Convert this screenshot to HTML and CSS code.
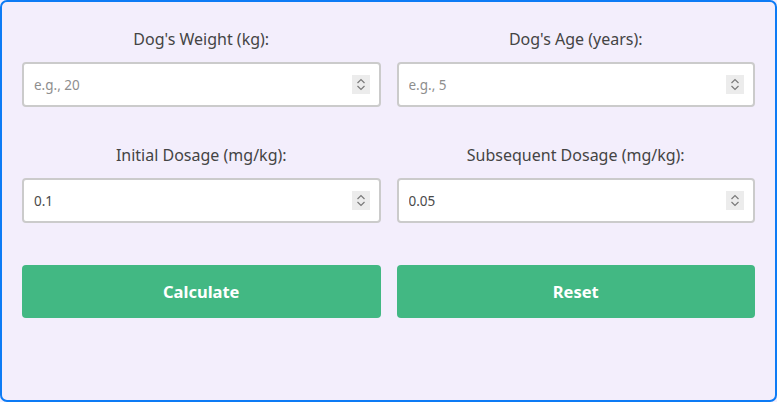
FILE: index.html
```html
<!DOCTYPE html>
<html>
<head>
<meta charset="utf-8">
<link rel="stylesheet" href="styles.css">
</head>
<body>
<div class="calc">
  <div class="grid">
    <div class="group">
      <label class="label">Dog's Weight (kg):</label>
      <div class="field">
        <input class="input" type="number" placeholder="e.g., 20">
        <span class="spin"><svg width="18" height="19" viewBox="0 0 18 19"><path d="M5.5 8 L9 4.5 L12.5 8" fill="none" stroke="#7a7a7a" stroke-width="1.2"/><path d="M5.5 11 L9 14.5 L12.5 11" fill="none" stroke="#7a7a7a" stroke-width="1.2"/></svg></span>
      </div>
    </div>
    <div class="group">
      <label class="label">Dog's Age (years):</label>
      <div class="field">
        <input class="input" type="number" placeholder="e.g., 5">
        <span class="spin"><svg width="18" height="19" viewBox="0 0 18 19"><path d="M5.5 8 L9 4.5 L12.5 8" fill="none" stroke="#7a7a7a" stroke-width="1.2"/><path d="M5.5 11 L9 14.5 L12.5 11" fill="none" stroke="#7a7a7a" stroke-width="1.2"/></svg></span>
      </div>
    </div>
    <div class="group">
      <label class="label">Initial Dosage (mg/kg):</label>
      <div class="field">
        <input class="input" type="number" value="0.1">
        <span class="spin"><svg width="18" height="19" viewBox="0 0 18 19"><path d="M5.5 8 L9 4.5 L12.5 8" fill="none" stroke="#7a7a7a" stroke-width="1.2"/><path d="M5.5 11 L9 14.5 L12.5 11" fill="none" stroke="#7a7a7a" stroke-width="1.2"/></svg></span>
      </div>
    </div>
    <div class="group">
      <label class="label">Subsequent Dosage (mg/kg):</label>
      <div class="field">
        <input class="input" type="number" value="0.05">
        <span class="spin"><svg width="18" height="19" viewBox="0 0 18 19"><path d="M5.5 8 L9 4.5 L12.5 8" fill="none" stroke="#7a7a7a" stroke-width="1.2"/><path d="M5.5 11 L9 14.5 L12.5 11" fill="none" stroke="#7a7a7a" stroke-width="1.2"/></svg></span>
      </div>
    </div>
  </div>
  <div class="buttons">
    <button class="btn">Calculate</button>
    <button class="btn">Reset</button>
  </div>
</div>
</body>
</html>
```
FILE: styles.css
```css
html, body {
  margin: 0;
  padding: 0;
}
body {
  font-family: "Noto Sans", "Open Sans", sans-serif;
  background: #f3eefc;
}
.calc {
  box-sizing: border-box;
  width: 777px;
  height: 402px;
  border: 2px solid #0d7bf5;
  border-radius: 7px;
  background: #f3eefc;
  padding: 26px 20px 20px 20px;
}
.grid {
  display: grid;
  grid-template-columns: 1fr 1fr;
  column-gap: 16px;
  row-gap: 37px;
}
.group {
  display: flex;
  flex-direction: column;
}
.label {
  display: block;
  text-align: center;
  font-size: 16px;
  line-height: 22px;
  color: #444;
  margin-bottom: 12px;
}
.field {
  position: relative;
}
.input {
  box-sizing: border-box;
  width: 100%;
  height: 45px;
  border: 2px solid #cbcbcb;
  border-radius: 4px;
  background: #fff;
  padding: 0 10px;
  font-family: inherit;
  font-size: 13.5px;
  color: #4a4a4a;
  outline: none;
  -moz-appearance: textfield;
}
.input::-webkit-outer-spin-button,
.input::-webkit-inner-spin-button {
  -webkit-appearance: none;
  margin: 0;
}
.input::placeholder {
  color: #8e8e8e;
}
.spin {
  position: absolute;
  right: 11px;
  top: 13px;
  width: 18px;
  height: 19px;
  background: #ececec;
  display: block;
}
.spin svg {
  display: block;
}
.buttons {
  display: grid;
  grid-template-columns: 1fr 1fr;
  column-gap: 16px;
  margin-top: 42px;
}
.btn {
  height: 53px;
  border: none;
  border-radius: 4px;
  background: #42b883;
  color: #fff;
  font-family: inherit;
  font-weight: bold;
  font-size: 16.5px;
  cursor: pointer;
}
```
